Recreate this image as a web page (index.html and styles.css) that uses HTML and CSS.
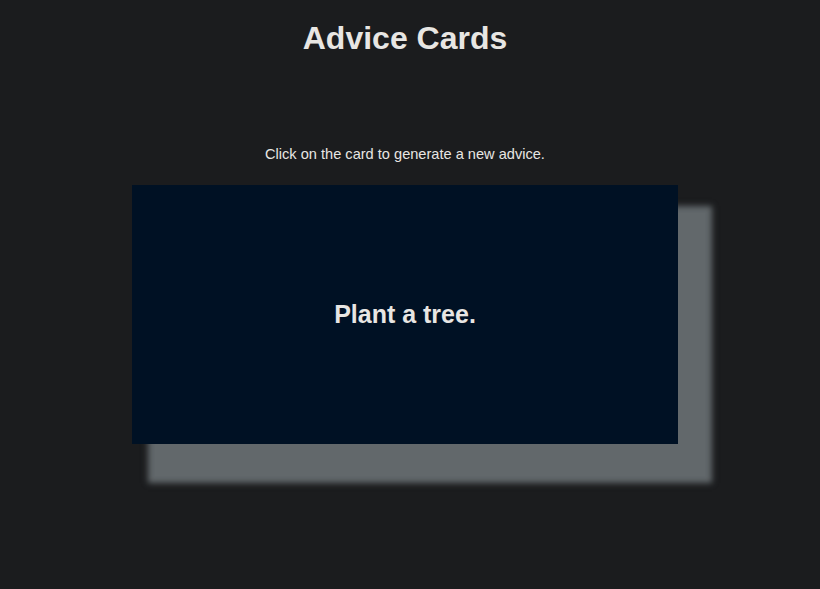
FILE: index.html
```html
<!DOCTYPE html>
<html>
  <head>
    <meta charset="utf-8">
    <title>Advice Cards</title>
    <link rel="stylesheet" href="styles.css">
  </head>
  <body>
    <div class="page">
      <h1 class="title">Advice Cards</h1>
      <p class="hint">Click on the card to generate a new advice.</p>
      <div class="card" id="card">
        <p class="advice" id="advice">Plant a tree.</p>
      </div>
    </div>
  </body>
</html>
```

FILE: styles.css
```css
html, body {
  height: 100%;
}
body {
  margin: 0;
  background-color: #1b1c1e;
  color: #e8e6e3;
  font-family: "Liberation Sans", Arial, sans-serif;
}
.page {
  width: 810px;
  min-height: 100%;
  display: flex;
  flex-direction: column;
  align-items: center;
}
.title {
  font-size: 32px;
  font-weight: bold;
  margin: 20px 0 0 0;
  line-height: 37px;
}
.hint {
  font-size: 14.6px;
  margin: 89px 0 0 0;
  line-height: 16px;
}
.card {
  width: 546px;
  height: 259px;
  margin-top: 23px;
  background-color: #001124;
  box-shadow: 25px 30px 6px 9px #62686b;
  display: flex;
  align-items: center;
  justify-content: center;
  cursor: pointer;
}
.advice {
  margin: 0;
  font-size: 25px;
  font-weight: bold;
}
```
